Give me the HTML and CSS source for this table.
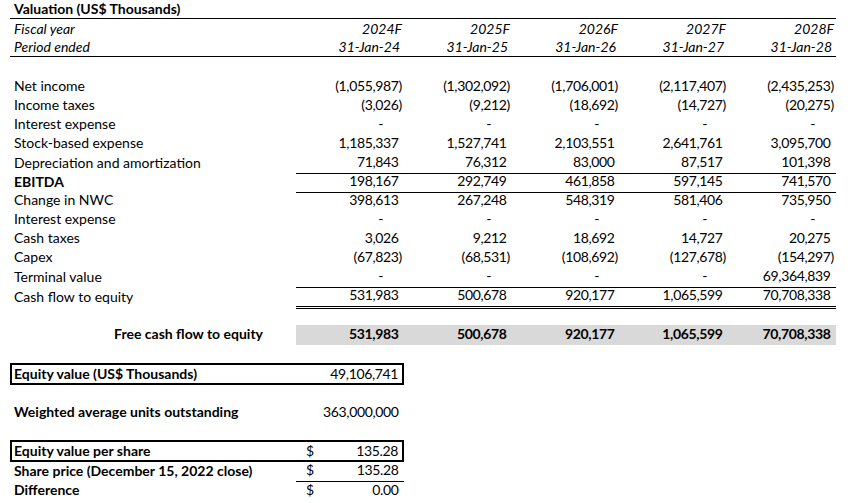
FILE: index.html
```html
<!DOCTYPE html>
<html>
<head>
<meta charset="utf-8">
<link rel="stylesheet" href="styles.css">
</head>
<body>
<div class="sheet">
  <div class="row h19 line-full bold top"><div class="lbl">Valuation (US$ Thousands)</div></div>
  <div class="row h19 ital top">
    <div class="lbl">Fiscal year</div>
    <div class="num up">2024F</div><div class="num up">2025F</div><div class="num up">2026F</div><div class="num up">2027F</div><div class="num up">2028F</div>
  </div>
  <div class="row h19 line-full ital top">
    <div class="lbl">Period ended</div>
    <div class="num dt">31-Jan-24</div><div class="num dt">31-Jan-25</div><div class="num dt">31-Jan-26</div><div class="num dt">31-Jan-27</div><div class="num dt">31-Jan-28</div>
  </div>
  <div class="row h20"></div>
  <div class="row h19">
    <div class="lbl">Net income</div>
    <div class="num">(1,055,987)</div><div class="num">(1,302,092)</div><div class="num">(1,706,001)</div><div class="num">(2,117,407)</div><div class="num">(2,435,253)</div>
  </div>
  <div class="row h19">
    <div class="lbl">Income taxes</div>
    <div class="num">(3,026)</div><div class="num">(9,212)</div><div class="num">(18,692)</div><div class="num">(14,727)</div><div class="num">(20,275)</div>
  </div>
  <div class="row h19">
    <div class="lbl">Interest expense</div>
    <div class="num">-<span class="h">00)</span></div><div class="num">-<span class="h">00)</span></div><div class="num">-<span class="h">00)</span></div><div class="num">-<span class="h">00)</span></div><div class="num">-<span class="h">00)</span></div>
  </div>
  <div class="row h19">
    <div class="lbl">Stock-based expense</div>
    <div class="num">1,185,337<span class="h">)</span></div><div class="num">1,527,741<span class="h">)</span></div><div class="num">2,103,551<span class="h">)</span></div><div class="num">2,641,761<span class="h">)</span></div><div class="num">3,095,700<span class="h">)</span></div>
  </div>
  <div class="row h19 ul">
    <div class="lbl">Depreciation and amortization</div>
    <div class="num">71,843<span class="h">)</span></div><div class="num">76,312<span class="h">)</span></div><div class="num">83,000<span class="h">)</span></div><div class="num">87,517<span class="h">)</span></div><div class="num">101,398<span class="h">)</span></div>
  </div>
  <div class="row h19 ul">
    <div class="lbl bold">EBITDA</div>
    <div class="num">198,167<span class="h">)</span></div><div class="num">292,749<span class="h">)</span></div><div class="num">461,858<span class="h">)</span></div><div class="num">597,145<span class="h">)</span></div><div class="num">741,570<span class="h">)</span></div>
  </div>
  <div class="row h19">
    <div class="lbl">Change in NWC</div>
    <div class="num">398,613<span class="h">)</span></div><div class="num">267,248<span class="h">)</span></div><div class="num">548,319<span class="h">)</span></div><div class="num">581,406<span class="h">)</span></div><div class="num">735,950<span class="h">)</span></div>
  </div>
  <div class="row h19">
    <div class="lbl">Interest expense</div>
    <div class="num">-<span class="h">00)</span></div><div class="num">-<span class="h">00)</span></div><div class="num">-<span class="h">00)</span></div><div class="num">-<span class="h">00)</span></div><div class="num">-<span class="h">00)</span></div>
  </div>
  <div class="row h19">
    <div class="lbl">Cash taxes</div>
    <div class="num">3,026<span class="h">)</span></div><div class="num">9,212<span class="h">)</span></div><div class="num">18,692<span class="h">)</span></div><div class="num">14,727<span class="h">)</span></div><div class="num">20,275<span class="h">)</span></div>
  </div>
  <div class="row h19">
    <div class="lbl">Capex</div>
    <div class="num">(67,823)</div><div class="num">(68,531)</div><div class="num">(108,692)</div><div class="num">(127,678)</div><div class="num">(154,297)</div>
  </div>
  <div class="row h19 ul">
    <div class="lbl">Terminal value</div>
    <div class="num">-<span class="h">00)</span></div><div class="num">-<span class="h">00)</span></div><div class="num">-<span class="h">00)</span></div><div class="num">-<span class="h">00)</span></div><div class="num">69,364,839<span class="h">)</span></div>
  </div>
  <div class="row h20 dbl">
    <div class="lbl">Cash flow to equity</div>
    <div class="num">531,983<span class="h">)</span></div><div class="num">500,678<span class="h">)</span></div><div class="num">920,177<span class="h">)</span></div><div class="num">1,065,599<span class="h">)</span></div><div class="num">70,708,338<span class="h">)</span></div>
  </div>
  <div class="row h19"></div>
  <div class="row h19 bold fill">
    <div class="lbl lbl-right">Free cash flow to equity</div>
    <div class="num">531,983<span class="h">)</span></div><div class="num">500,678<span class="h">)</span></div><div class="num">920,177<span class="h">)</span></div><div class="num">1,065,599<span class="h">)</span></div><div class="num">70,708,338<span class="h">)</span></div>
  </div>
  <div class="row h19"></div>
  <div class="row h21 bold">
    <div class="box">
      <div class="lbl">Equity value (US$ Thousands)</div>
      <div class="num norm">49,106,741<span class="h">)</span></div>
    </div>
  </div>
  <div class="row h19"></div>
  <div class="row h19 bold">
    <div class="lbl">Weighted average units outstanding</div>
    <div class="num norm">363,000,000<span class="h">)</span></div>
  </div>
  <div class="row h18"></div>
  <div class="row h21 bold">
    <div class="box">
      <div class="lbl">Equity value per share</div>
      <div class="num norm cur"><span class="dol">$</span><span>135.28<span class="h">)</span></span></div>
    </div>
  </div>
  <div class="row h20 bold ul1">
    <div class="lbl">Share price (December 15, 2022 close)</div>
    <div class="num norm cur"><span class="dol">$</span><span>135.28<span class="h">)</span></span></div>
  </div>
  <div class="row h19 bold">
    <div class="lbl">Difference</div>
    <div class="num norm cur"><span class="dol">$</span><span>0.00<span class="h">)</span></span></div>
  </div>
</div>
</body>
</html>
```
FILE: styles.css
```css
* { box-sizing: border-box; }
html, body { margin: 0; padding: 0; background: #ffffff; }
body {
  font-family: Lato, "Liberation Sans", sans-serif;
  font-size: 14px;
  color: #000000;
  width: 852px;
  height: 503px;
  overflow: hidden;
}
.sheet {
  margin-left: 10px;
  width: 826px;
  display: flex;
  flex-direction: column;
}
.row {
  display: grid;
  grid-template-columns: 286px repeat(5, 108px);
  white-space: nowrap;
}
.h18 { height: 18px; }
.h19 { height: 19px; }
.h20 { height: 20px; }
.h21 { height: 21px; }
.row > div { display: flex; align-items: center; padding-bottom: 3px; }
.top > div { padding-bottom: 1px; }
.lbl { padding-left: 4px; }
.lbl-right { justify-content: flex-end; padding-right: 33px; }
.num {
  justify-content: flex-end;
  padding-right: 2px;
  letter-spacing: -0.35px;
}
.up { padding-right: 2px; letter-spacing: 0; }
.dt { padding-right: 4px; letter-spacing: 0; }
.h { visibility: hidden; }
.bold { font-weight: 700; }
.ital { font-style: italic; }
.line-full { border-bottom: 1px solid #000; }
.ul > .num { border-bottom: 1px solid #000; }
.ul1 > .num { border-bottom: 1px solid #000; }
.dbl > .num { border-bottom: 3px double #000; }
.fill > .num { background: #d9d9d9; }
.bold .norm { font-weight: 400; }
.box {
  grid-column: 1 / 3;
  border: 2px solid #000;
  display: grid !important;
  grid-template-columns: 284px 106px;
  padding-bottom: 0 !important;
}
.box > div { display: flex; align-items: center; padding-bottom: 1px; }
.box > .lbl { padding-left: 2px; }
.box > .num { padding-right: 0.5px; }
.cur { justify-content: space-between !important; padding-left: 10px; }
.dol { letter-spacing: 0; }
```
